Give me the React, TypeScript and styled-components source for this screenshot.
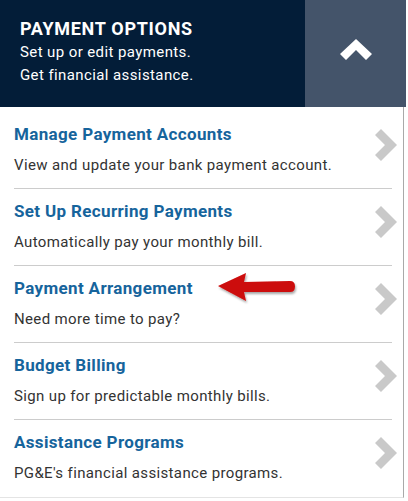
import React from 'react'
import styled, { createGlobalStyle } from 'styled-components'

const GlobalStyle = createGlobalStyle`
  html, body {
    margin: 0;
    padding: 0;
    background: #ffffff;
  }
  body {
    font-family: Roboto, 'Liberation Sans', Arial, sans-serif;
  }
`

interface PaymentOption {
  title: string
  description: string
}

const options: PaymentOption[] = [
  { title: 'Manage Payment Accounts', description: 'View and update your bank payment account.' },
  { title: 'Set Up Recurring Payments', description: 'Automatically pay your monthly bill.' },
  { title: 'Payment Arrangement', description: 'Need more time to pay?' },
  { title: 'Budget Billing', description: 'Sign up for predictable monthly bills.' },
  { title: 'Assistance Programs', description: "PG&E's financial assistance programs." }
]

const ChevronRight = () => (
  <svg width='22' height='32' viewBox='0 0 22 32'>
    <polygon points='0,6 6,0 22,16 6,32 0,26 10,16' fill='#c9c9c9' />
  </svg>
)

const ChevronUp = () => (
  <svg width='32' height='21' viewBox='0 0 32 21'>
    <polygon points='0,15 16,0 32,15 26,21 16,11 6,21' fill='#ffffff' />
  </svg>
)

const RedArrow = () => (
  <svg width='84' height='34' viewBox='0 0 84 34'>
    <defs>
      <filter id='shadow' x='-10%' y='-30%' width='130%' height='170%'>
        <feDropShadow dx='1' dy='2' stdDeviation='1.2' floodColor='#000' floodOpacity='0.35' />
      </filter>
    </defs>
    <g filter='url(#shadow)'>
      <path d='M2 15 L30 2 L28 11 L74 10 Q79 10 79 15.5 Q79 21 74 21 L28 21 L30 30 Z' fill='#cc0a0a' />
    </g>
  </svg>
)

export default function App() {
  return (
    <>
      <GlobalStyle />
      <S.Panel>
        <S.Header>
          <S.HeaderText>
            <S.HeaderTitle>PAYMENT OPTIONS</S.HeaderTitle>
            <S.HeaderLine>Set up or edit payments.</S.HeaderLine>
            <S.HeaderLine>Get financial assistance.</S.HeaderLine>
          </S.HeaderText>
          <S.Toggle type='button' aria-label='Collapse'>
            <ChevronUp />
          </S.Toggle>
        </S.Header>
        <S.List>
          {options.map((option, index) => (
            <S.Row key={option.title} first={index === 0} last={index === options.length - 1}>
              <S.RowText>
                <S.RowTitle>
                  {option.title}
                  {option.title === 'Payment Arrangement' && (
                    <S.ArrowWrap>
                      <RedArrow />
                    </S.ArrowWrap>
                  )}
                </S.RowTitle>
                <S.RowDescription>{option.description}</S.RowDescription>
              </S.RowText>
              <S.ChevronWrap>
                <ChevronRight />
              </S.ChevronWrap>
            </S.Row>
          ))}
        </S.List>
      </S.Panel>
    </>
  )
}

const S = {
  Panel: styled.div`
    width: 406px;
    height: 498px;
    display: flex;
    flex-direction: column;
    background: #ffffff;
    border-right: 2px solid #ffffff;
  `,
  Header: styled.div`
    display: flex;
    flex-direction: row;
    height: 107px;
  `,
  HeaderText: styled.div`
    flex: 1;
    background-color: #031d38;
    padding: 17px 20px 0 20px;
    color: #ffffff;
  `,
  HeaderTitle: styled.div`
    font-size: 18px;
    font-weight: 700;
    line-height: 24px;
    letter-spacing: 0.7px;
  `,
  HeaderLine: styled.div`
    font-size: 15px;
    line-height: 23px;
    letter-spacing: 0.4px;
  `,
  Toggle: styled.button`
    width: 101px;
    border: none;
    padding: 0;
    background-color: #44546a;
    display: flex;
    align-items: center;
    justify-content: center;
    cursor: pointer;
    padding-bottom: 8px;
  `,
  List: styled.div`
    flex: 1;
    display: flex;
    flex-direction: column;
    border-right: 1px solid #a9a9a9;
    border-bottom: 1px solid #e4e4e4;
    margin-right: 2px;
  `,
  Row: styled.div<{ first?: boolean; last?: boolean }>`
    display: flex;
    flex-direction: row;
    align-items: center;
    margin: 0 11px 0 14px;
    padding: ${({ first }) => (first ? '16px' : '11px')} 0 13px 0;
    border-bottom: ${({ last }) => (last ? 'none' : '1px solid #cccccc')};
  `,
  RowText: styled.div`
    flex: 1;
    display: flex;
    flex-direction: column;
    gap: 10px;
  `,
  RowTitle: styled.div`
    position: relative;
    font-size: 17px;
    font-weight: 700;
    line-height: 22px;
    letter-spacing: 0.35px;
    color: #16649c;
  `,
  RowDescription: styled.div`
    font-size: 15px;
    line-height: 20px;
    letter-spacing: 0.36px;
    color: #333333;
  `,
  ArrowWrap: styled.span`
    position: absolute;
    left: 202px;
    top: -6px;
  `,
  ChevronWrap: styled.div`
    width: 22px;
    display: flex;
    margin-top: -8px;
    margin-right: -5px;
  `
}
